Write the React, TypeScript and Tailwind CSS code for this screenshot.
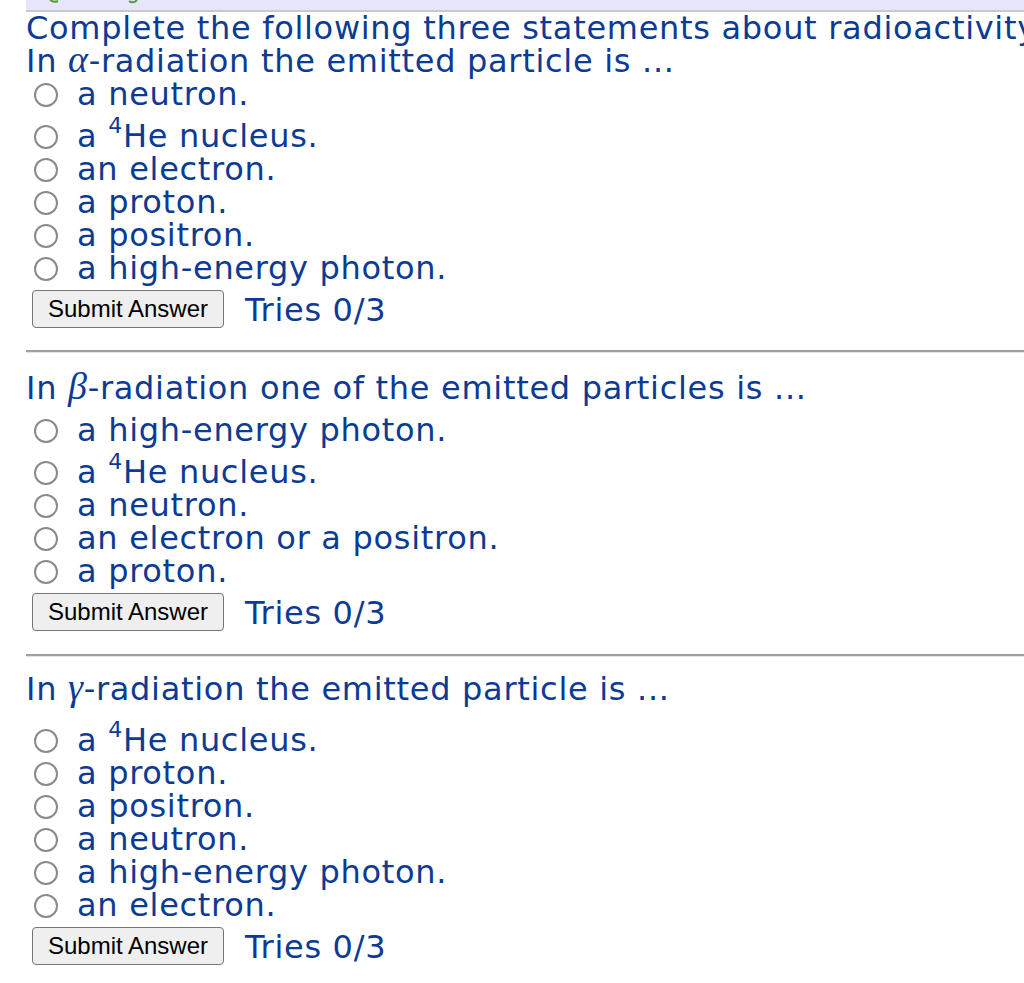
import type { ReactNode } from 'react'

type Option = {
  text: ReactNode
  sup?: boolean
}

const he: Option = {
  text: (
    <>
      a <span className="relative -top-[14px] text-[22px] leading-[0]">4</span>He nucleus.
    </>
  ),
  sup: true,
}

function Greek({ children }: { children: ReactNode }) {
  return <span className="font-['Liberation_Serif'] text-[38px] italic leading-[0]">{children}</span>
}

function RadioRow({ option, name }: { option: Option; name: string }) {
  return (
    <label className={`flex items-center ${option.sup ? 'h-[42px] pt-[9px]' : 'h-[33px]'}`}>
      <input
        type="radio"
        name={name}
        className="ml-[8px] h-[24px] w-[24px] shrink-0 appearance-none rounded-full border-2 border-[#8a8a8a] bg-white"
      />
      <span className="ml-[19px] whitespace-nowrap">{option.text}</span>
    </label>
  )
}

function SubmitRow() {
  return (
    <div className="mt-[5px] flex items-end">
      <button className="ml-[6px] h-[38px] w-[192px] rounded-[4px] border border-[#767676] bg-[#efefef] font-['Liberation_Sans'] text-[24px] leading-none tracking-normal text-black">
        Submit Answer
      </button>
      <span className="mb-[1px] ml-[21px]">Tries 0/3</span>
    </div>
  )
}

function Rule({ className }: { className: string }) {
  return <div className={`h-[3px] border-t-2 border-[#a0a0a0] bg-[#e4e4e4] ${className}`} />
}

export default function App() {
  const alpha: Option[] = [
    { text: 'a neutron.' },
    he,
    { text: 'an electron.' },
    { text: 'a proton.' },
    { text: 'a positron.' },
    { text: 'a high-energy photon.' },
  ]
  const beta: Option[] = [
    { text: 'a high-energy photon.' },
    he,
    { text: 'a neutron.' },
    { text: 'an electron or a positron.' },
    { text: 'a proton.' },
  ]
  const gamma: Option[] = [
    he,
    { text: 'a proton.' },
    { text: 'a positron.' },
    { text: 'a neutron.' },
    { text: 'a high-energy photon.' },
    { text: 'an electron.' },
  ]

  return (
    <div className="min-h-[983px] w-[1024px] overflow-hidden bg-white pl-[26px] font-['DejaVu_Sans',Verdana,sans-serif] text-[32px] leading-[33px] tracking-[0.7px] text-[#0b3b94]">
      <div className="h-[12px] border-b-2 border-[#c9c9c9] bg-[#e6e6fa]">
        <svg width="160" height="10" viewBox="0 0 160 10" className="block">
          <path d="M24 0 Q28 3 32 1" stroke="#5a9a35" strokeWidth="2" fill="none" />
          <path d="M103 1 Q107 4 111 0" stroke="#5a9a35" strokeWidth="2" fill="none" />
        </svg>
      </div>

      <div className="whitespace-nowrap">Complete the following three statements about radioactivity</div>
      <div className="whitespace-nowrap">
        In <Greek>α</Greek>-radiation the emitted particle is ...
      </div>
      <div>
        {alpha.map((o, i) => (
          <RadioRow key={i} option={o} name="alpha" />
        ))}
      </div>
      <SubmitRow />

      <Rule className="mt-[22px]" />

      <div className="mt-[19px] whitespace-nowrap">
        In <Greek>β</Greek>-radiation one of the emitted particles is ...
      </div>
      <div className="mt-[9px]">
        {beta.map((o, i) => (
          <RadioRow key={i} option={o} name="beta" />
        ))}
      </div>
      <SubmitRow />

      <Rule className="mt-[23px]" />

      <div className="mt-[16px] whitespace-nowrap">
        In <Greek>γ</Greek>-radiation the emitted particle is ...
      </div>
      <div className="mt-[9px]">
        {gamma.map((o, i) => (
          <RadioRow key={i} option={o} name="gamma" />
        ))}
      </div>
      <SubmitRow />
    </div>
  )
}
